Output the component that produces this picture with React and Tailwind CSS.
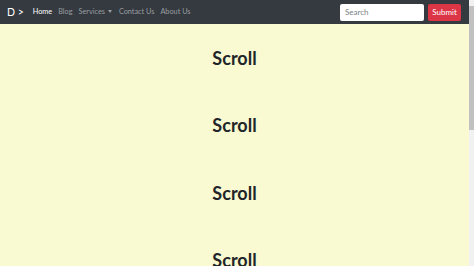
export default function App() {
  const font = { fontFamily: 'Lato, "Noto Sans", Arial, sans-serif' };
  return (
    <div className="w-[474px] h-[266px] flex overflow-hidden bg-[#fafad2]" style={font}>
      <div className="w-[469px] flex flex-col">
        <nav className="h-[24px] shrink-0 bg-[#343a40] flex items-center pl-[7px] pr-[8px]">
          <span className="text-white text-[10.5px] leading-none mr-[9px]">D &gt;</span>
          <div className="flex items-center gap-[6px] text-[7.3px] leading-none">
            <span className="text-white">Home</span>
            <span className="text-[#9a9da0]">Blog</span>
            <span className="text-[#9a9da0] flex items-center gap-[3px]">
              Services
              <span className="w-0 h-0 border-l-[2.5px] border-r-[2.5px] border-t-[3px] border-l-transparent border-r-transparent border-t-[#9a9da0]"></span>
            </span>
            <span className="text-[#9a9da0] ml-[1px]">Contact Us</span>
            <span className="text-[#9a9da0]">About Us</span>
          </div>
          <div className="ml-auto flex items-center gap-[4px]">
            <div className="w-[84px] h-[17px] bg-white rounded-[2px] flex items-center px-[5px] text-[8px] text-[#7a7f85]">Search</div>
            <div className="w-[33px] h-[17px] bg-[#dc3545] rounded-[2px] flex items-center justify-center text-[8px] text-white">Submit</div>
          </div>
        </nav>
        <div className="flex-1 flex flex-col overflow-hidden">
          {[0, 1, 2, 3].map((i) => (
            <div key={i} className="h-[67.5px] shrink-0 flex items-center justify-center">
              <h1 className="text-[18px] font-bold text-[#212529] leading-none">Scroll</h1>
            </div>
          ))}
        </div>
      </div>
      <div className="w-[5px] bg-[#f1f1f1] flex flex-col items-center">
        <div className="h-[6px]"></div>
        <div className="w-[5px] h-[124px] bg-[#c1c1c1]"></div>
      </div>
    </div>
  );
}
